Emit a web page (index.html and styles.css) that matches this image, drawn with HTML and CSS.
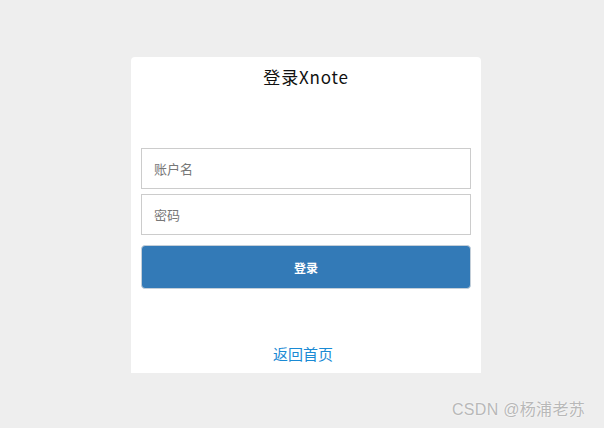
FILE: index.html
```html
<!DOCTYPE html>
<html lang="zh">
<head>
<meta charset="utf-8">
<title>登录Xnote</title>
<link rel="stylesheet" href="styles.css">
</head>
<body>
<div class="card">
  <h1 class="title">登录Xnote</h1>
  <form class="form">
    <input class="field" type="text" placeholder="账户名">
    <input class="field" type="password" placeholder="密码">
    <button class="btn" type="button">登录</button>
  </form>
  <div class="back"><a href="#">返回首页</a></div>
</div>
<div class="watermark">CSDN @杨浦老苏</div>
</body>
</html>
```
FILE: styles.css
```css
html, body {
  margin: 0;
  padding: 0;
  background: #eeeeee;
  font-family: "Noto Sans CJK SC", "Noto Sans", sans-serif;
}
body {
  width: 604px;
  height: 428px;
  position: relative;
  overflow: hidden;
}
.card {
  box-sizing: border-box;
  width: 350px;
  height: 316px;
  margin: 57px 0 0 131px;
  padding: 9px 10px 9px;
  background: #ffffff;
  border-radius: 4px 4px 0 0;
}
.title {
  margin: 0;
  font-size: 17px;
  font-weight: normal;
  letter-spacing: 0.8px;
  line-height: 22px;
  text-align: center;
  color: #111;
}
.form {
  margin-top: 60px;
  display: flex;
  flex-direction: column;
}
.field {
  box-sizing: border-box;
  height: 41px;
  width: 100%;
  margin: 0 0 5px;
  padding: 0 12px;
  border: 1px solid #cccccc;
  border-radius: 0;
  font-family: inherit;
  font-size: 13px;
  color: #555;
  outline: none;
}
.field::placeholder {
  color: #777;
}
.btn {
  box-sizing: border-box;
  margin-top: 5px;
  height: 44px;
  width: 100%;
  background: #337ab7;
  border: 1px solid #c4cfd9;
  border-radius: 4px;
  color: #ffffff;
  font-family: inherit;
  font-size: 12px;
  font-weight: bold;
}
.back {
  margin-top: 55px;
  text-align: center;
  line-height: 20px;
  font-size: 15px;
}
.back a {
  color: #1a8ad4;
  text-decoration: none;
  margin-right: 6px;
}
.watermark {
  position: absolute;
  left: 452px;
  top: 400px;
  font-size: 16px;
  letter-spacing: 0.3px;
  line-height: 20px;
  color: #b8b8b8;
  text-shadow: 0 0 2px #fff;
  font-family: "Liberation Sans", "Noto Sans CJK SC", sans-serif;
}
```
